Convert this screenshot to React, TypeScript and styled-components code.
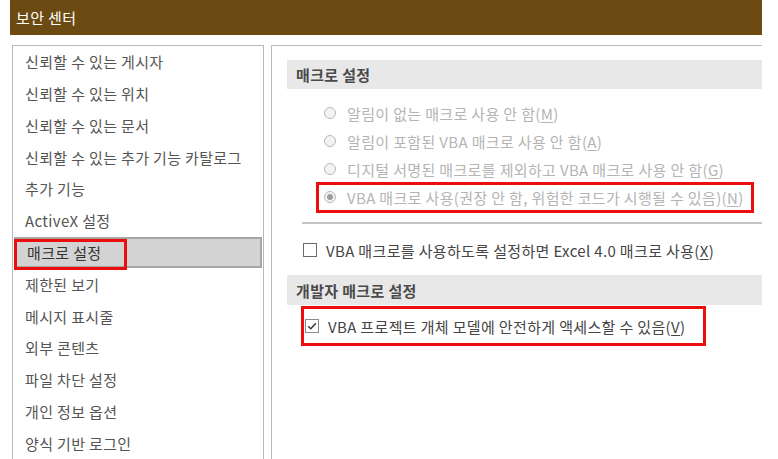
import React from "react";
import styled, { createGlobalStyle, css } from "styled-components";

const Global = createGlobalStyle`
  html, body { margin: 0; padding: 0; background: #fff; overflow: hidden; }
  body { font-family: "Noto Sans CJK KR", "Malgun Gothic", "Noto Sans", sans-serif; }
`;

const Page = styled.div`
  width: 778px;
  height: 459px;
  display: flex;
  flex-direction: column;
  background: #fff;
  overflow: hidden;
  letter-spacing: 0.35px;
`;

const TitleBar = styled.div`
  margin-left: 10px;
  width: 752px;
  height: 35px;
  flex: none;
  background: #6b4b12;
  color: #fff;
  font-size: 15px;
  display: flex;
  align-items: center;
  padding-left: 6px;
  box-sizing: border-box;
`;

const Body = styled.div`
  flex: 1;
  display: flex;
  gap: 7px;
  padding: 10px 0 0 12px;
  min-height: 0;
`;

const NavPanel = styled.div`
  width: 252px;
  box-sizing: border-box;
  border: 1px solid #b9b9b9;
  border-bottom: none;
  display: flex;
  flex-direction: column;
`;

const NavItem = styled.div<{ $active?: boolean }>`
  position: relative;
  height: 32px;
  box-sizing: border-box;
  display: flex;
  align-items: center;
  padding-left: 12px;
  font-size: 15px;
  color: #555;
  white-space: nowrap;
  ${(p) =>
    p.$active &&
    css`
      margin: 0 1px;
      padding-left: 11px;
      background: #d3d3d3;
      border: 2px solid #a6a6a6;
      color: #333;
      &::after {
        content: "";
        position: absolute;
        left: -2px;
        top: 0px;
        width: 113px;
        height: 31px;
        box-sizing: border-box;
        border: 3px solid #ec0d0d;
      }
    `}
`;

const SettingsPanel = styled.div`
  flex: 1;
  max-width: 491px;
  box-sizing: border-box;
  border-top: 1px solid #b9b9b9;
  border-left: 1px solid #b9b9b9;
  padding: 14px 0 0 15px;
  display: flex;
  flex-direction: column;
`;

const SectionHeader = styled.div<{ $top?: number; $h?: number }>`
  height: ${(p) => p.$h ?? 29}px;
  margin-top: ${(p) => p.$top ?? 0}px;
  background: #e8e8e8;
  display: flex;
  align-items: center;
  padding-left: 9px;
  font-size: 15px;
  font-weight: 700;
  color: #4a4a4a;
`;

const RadioList = styled.div`
  margin-top: 10px;
  padding-left: 37px;
  display: flex;
  flex-direction: column;
`;

const OptionRow = styled.div<{ $disabled?: boolean; $marked?: boolean }>`
  position: relative;
  height: 28px;
  display: flex;
  align-items: center;
  gap: 8px;
  font-size: 15px;
  white-space: nowrap;
  color: ${(p) => (p.$disabled ? "#b4b4b4" : "#454545")};
  ${(p) =>
    p.$marked &&
    css`
      &::after {
        content: "";
        position: absolute;
        left: -8px;
        right: 8px;
        top: -1px;
        bottom: -2px;
        border: 3px solid #ec0d0d;
      }
    `}
`;

const Radio = styled.span<{ $checked?: boolean }>`
  width: 12px;
  height: 12px;
  box-sizing: border-box;
  border-radius: 50%;
  border: 1px solid #b8b8b8;
  background: #f3f3f3;
  display: flex;
  align-items: center;
  justify-content: center;
  flex: none;
  margin-right: 3px;
  &::before {
    content: "";
    width: 6px;
    height: 6px;
    border-radius: 50%;
    background: ${(p) => (p.$checked ? "#9e9e9e" : "transparent")};
  }
`;

const Separator = styled.div`
  margin: 11px 0 0 15px;
  height: 2px;
  background: #c4c4c4;
`;

const CheckRow = styled.div<{ $top: number; $left: number; $h: number; $marked?: boolean }>`
  position: relative;
  align-self: flex-start;
  margin-top: ${(p) => p.$top}px;
  padding-left: ${(p) => p.$left}px;
  height: ${(p) => p.$h}px;
  display: flex;
  align-items: center;
  gap: 9px;
  font-size: 15px;
  color: #454545;
  white-space: nowrap;
  ${(p) =>
    p.$marked &&
    css`
      &::after {
        content: "";
        position: absolute;
        left: 14px;
        right: -21px;
        top: 0;
        bottom: 0;
        border: 3px solid #ec0d0d;
      }
    `}
`;

const CheckBox = styled.span<{ $checked?: boolean }>`
  width: 14px;
  height: 14px;
  box-sizing: border-box;
  border: 1px solid ${(p) => (p.$checked ? "#8a8a8a" : "#6a6a6a")};
  background: #fff;
  display: flex;
  align-items: center;
  justify-content: center;
  flex: none;
`;

const Key = styled.span`
  text-decoration: underline;
  text-underline-offset: 2px;
`;

const navItems = [
  "신뢰할 수 있는 게시자",
  "신뢰할 수 있는 위치",
  "신뢰할 수 있는 문서",
  "신뢰할 수 있는 추가 기능 카탈로그",
  "추가 기능",
  "ActiveX 설정",
  "매크로 설정",
  "제한된 보기",
  "메시지 표시줄",
  "외부 콘텐츠",
  "파일 차단 설정",
  "개인 정보 옵션",
  "양식 기반 로그인",
];

const radios: { text: string; key: string; checked?: boolean }[] = [
  { text: "알림이 없는 매크로 사용 안 함", key: "M" },
  { text: "알림이 포함된 VBA 매크로 사용 안 함", key: "A" },
  { text: "디지털 서명된 매크로를 제외하고 VBA 매크로 사용 안 함", key: "G" },
  { text: "VBA 매크로 사용(권장 안 함, 위험한 코드가 시행될 수 있음)", key: "N", checked: true },
];

export default function App() {
  return (
    <Page>
      <Global />
      <TitleBar>보안 센터</TitleBar>
      <Body>
        <NavPanel>
          {navItems.map((t) => (
            <NavItem key={t} $active={t === "매크로 설정"}>
              {t}
            </NavItem>
          ))}
        </NavPanel>
        <SettingsPanel>
          <SectionHeader>매크로 설정</SectionHeader>
          <RadioList>
            {radios.map((r) => (
              <OptionRow key={r.key} $disabled $marked={r.checked}>
                <Radio $checked={r.checked} />
                <span>
                  {r.text}(<Key>{r.key}</Key>)
                </span>
              </OptionRow>
            ))}
          </RadioList>
          <Separator />
          <CheckRow $top={12} $left={16} $h={28}>
            <CheckBox />
            <span>
              VBA 매크로를 사용하도록 설정하면 Excel 4.0 매크로 사용(<Key>X</Key>)
            </span>
          </CheckRow>
          <SectionHeader $top={11} $h={30}>
            개발자 매크로 설정
          </SectionHeader>
          <CheckRow $top={1} $left={18} $h={40} $marked>
            <CheckBox $checked>
              <svg width="10" height="10" viewBox="0 0 10 10">
                <path d="M1.2 5.2 L3.8 7.8 L8.8 2.2" fill="none" stroke="#333" strokeWidth="1.4" />
              </svg>
            </CheckBox>
            <span>
              VBA 프로젝트 개체 모델에 안전하게 액세스할 수 있음(<Key>V</Key>)
            </span>
          </CheckRow>
        </SettingsPanel>
      </Body>
    </Page>
  );
}
